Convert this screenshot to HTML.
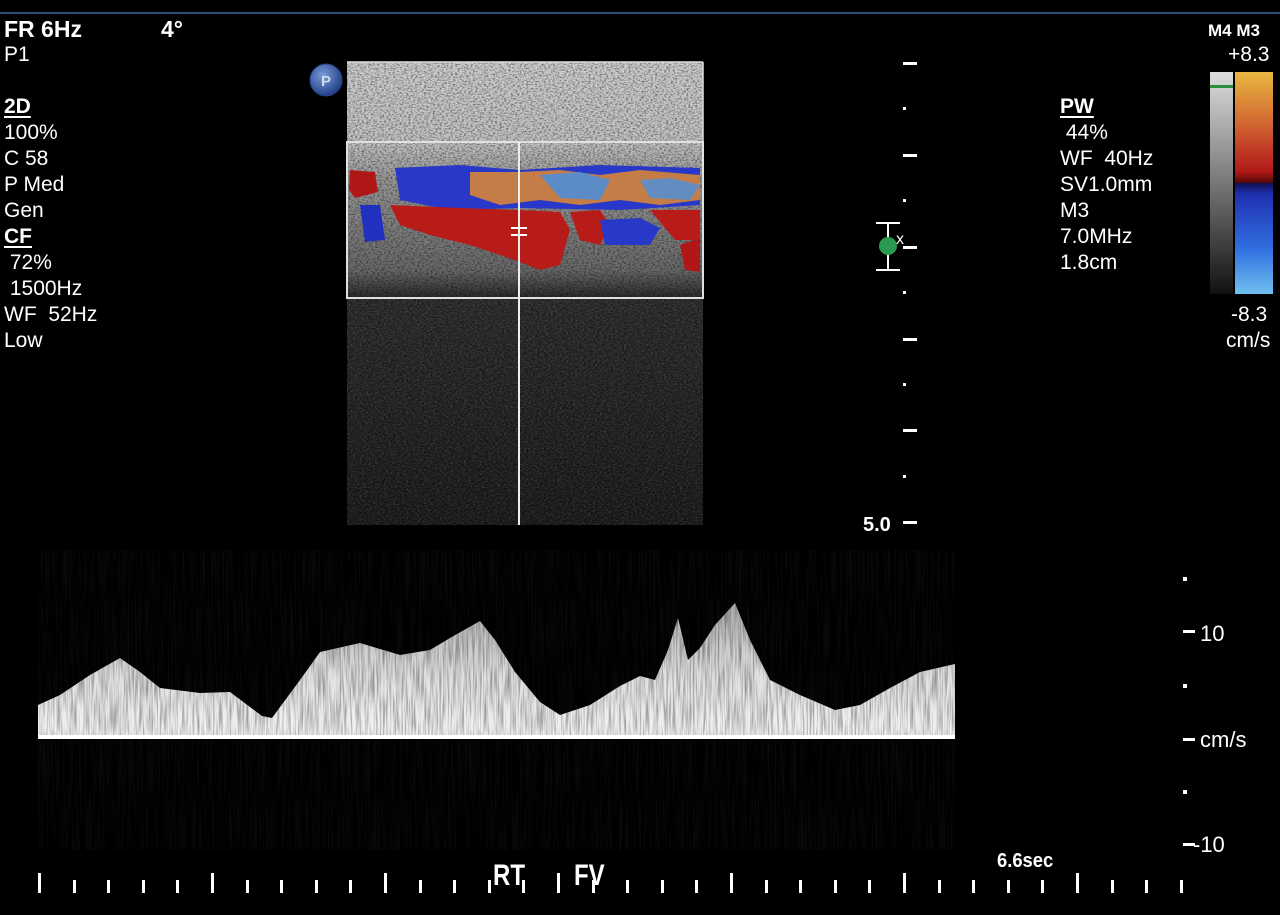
<!DOCTYPE html>
<html><head><meta charset="utf-8">
<style>
html,body{margin:0;padding:0;background:#000;}
body{width:1280px;height:915px;position:relative;overflow:hidden;font-family:"Liberation Sans",Arial,sans-serif;color:#fff;}
.t{position:absolute;font-size:21px;line-height:26px;white-space:pre;}
.b{font-weight:bold;}
u{text-decoration:underline;text-decoration-thickness:2px;text-underline-offset:3px;}
</style></head><body>
<div style="position:absolute;left:0;top:12px;width:1280px;height:2px;background:#2c4f7e"></div>

<div class="t b" style="left:4px;top:16px;font-size:23px">FR 6Hz</div>
<div class="t b" style="left:161px;top:16px;font-size:23px">4°</div>
<div class="t" style="left:4px;top:42px">P1</div>
<div class="t" style="left:4px;top:94px"><b><u>2D</u></b>
100%
C 58
P Med
Gen
<b><u>CF</u></b>
 72%
 1500Hz
WF  52Hz
Low</div>

<div class="t" style="left:1060px;top:94px"><b><u>PW</u></b>
 44%
WF  40Hz
SV1.0mm
M3
7.0MHz
1.8cm</div>

<div class="t b" style="left:1208px;top:18px;font-size:17px">M4 M3</div>
<div class="t" style="left:1228px;top:42px">+8.3</div>
<div class="t" style="left:1231px;top:302px">-8.3</div>
<div class="t" style="left:1226px;top:328px">cm/s</div>

<svg width="1280" height="915" style="position:absolute;left:0;top:0">
<defs>
<filter id="sp" x="0" y="0" width="100%" height="100%">
<feTurbulence type="fractalNoise" baseFrequency="0.45 0.7" numOctaves="2" seed="3"/>
<feColorMatrix type="matrix" values="0 0 0 0 0  0 0 0 0 0  0 0 0 0 0  2.2 0 0 0 -0.9"/>
</filter>
<filter id="spw" x="0" y="0" width="100%" height="100%">
<feTurbulence type="fractalNoise" baseFrequency="0.45 0.7" numOctaves="2" seed="9"/>
<feColorMatrix type="matrix" values="0 0 0 0 1  0 0 0 0 1  0 0 0 0 1  2.2 0 0 0 -0.9"/>
</filter>
<filter id="vs" x="0" y="0" width="100%" height="100%">
<feTurbulence type="fractalNoise" baseFrequency="0.6 0.015" numOctaves="2" seed="7"/>
<feColorMatrix type="matrix" values="0 0 0 0 1  0 0 0 0 1  0 0 0 0 1  2 0 0 0 -0.8"/>
</filter>
<filter id="vsd" x="0" y="0" width="100%" height="100%">
<feTurbulence type="fractalNoise" baseFrequency="0.6 0.03" numOctaves="2" seed="5"/>
<feColorMatrix type="matrix" values="0 0 0 0 0  0 0 0 0 0  0 0 0 0 0  2 0 0 0 -0.75"/>
</filter>
<linearGradient id="cb" x1="0" y1="0" x2="0" y2="1">
<stop offset="0" stop-color="#e8b840"/><stop offset="0.25" stop-color="#d06030"/><stop offset="0.45" stop-color="#b01818"/><stop offset="0.5" stop-color="#500808"/>
<stop offset="0.5" stop-color="#101050"/><stop offset="0.55" stop-color="#2030b0"/><stop offset="0.8" stop-color="#3070e0"/><stop offset="1" stop-color="#70c0f0"/></linearGradient>
<linearGradient id="gb" x1="0" y1="0" x2="0" y2="1"><stop offset="0" stop-color="#ddd"/><stop offset="1" stop-color="#111"/></linearGradient>
<linearGradient id="bm" x1="0" y1="0" x2="0" y2="1">
<stop offset="0" stop-color="#cfcfcf"/><stop offset="0.17" stop-color="#c4c4c4"/><stop offset="0.25" stop-color="#9a9a9a"/><stop offset="0.45" stop-color="#6a6a6a"/><stop offset="0.51" stop-color="#2a2a2a"/><stop offset="1" stop-color="#181818"/></linearGradient>
<radialGradient id="pb" cx="0.4" cy="0.35" r="0.7"><stop offset="0" stop-color="#7a9ad8"/><stop offset="1" stop-color="#1d3a80"/></radialGradient>
<linearGradient id="wf" x1="0" y1="0" x2="0" y2="1"><stop offset="0" stop-color="#aaa"/><stop offset="0.5" stop-color="#ddd"/><stop offset="1" stop-color="#f4f4f4"/></linearGradient>
<clipPath id="wclip"><path id="wave" d="M38,705 L60,695 L90,675 L120,658 L140,672 L160,688 L200,693 L230,692 L262,716 L272,718 L300,680 L320,652 L360,643 L400,655 L430,650 L450,638 L480,621 L495,640 L515,672 L540,702 L560,715 L590,705 L620,686 L640,676 L655,680 L668,650 L678,618 L688,660 L700,648 L715,625 L735,603 L750,640 L770,680 L800,695 L835,710 L860,705 L890,688 L920,672 L955,664 L955,737 L38,737 Z"/></clipPath>
</defs>

<rect x="347" y="62" width="356" height="463" fill="url(#bm)"/>
<rect x="347" y="62" width="356" height="463" filter="url(#sp)" opacity="0.55"/>
<rect x="347" y="298" width="356" height="227" filter="url(#spw)" opacity="0.15"/>
<line x1="347" y1="62" x2="703" y2="62" stroke="#ddd" stroke-width="1.5"/>
<line x1="703" y1="62" x2="703" y2="298" stroke="#ddd" stroke-width="1.5"/>

<g>
<path d="M395,168 L460,165 L520,170 L600,165 L700,168 L700,205 L620,210 L520,208 L450,210 L400,200 Z" fill="#2838c8"/>
<path d="M470,172 L520,172 L560,170 L600,175 L640,170 L700,175 L700,200 L660,205 L620,200 L580,205 L540,200 L500,205 L470,195 Z" fill="#e08a30" opacity="0.85"/>
<path d="M540,175 L580,172 L610,180 L600,200 L560,198 Z" fill="#4090e8" opacity="0.8"/>
<path d="M640,180 L670,178 L700,185 L690,200 L650,198 Z" fill="#4a90e0" opacity="0.8"/>
<path d="M350,170 L375,172 L378,192 L355,198 L349,190 Z" fill="#b01818"/>
<path d="M360,205 L380,205 L385,240 L365,242 Z" fill="#2030c0"/>
<path d="M390,205 L460,208 L520,210 L560,212 L570,230 L560,265 L540,270 L520,262 L500,255 L470,245 L430,235 L400,225 Z" fill="#b81c18"/>
<path d="M570,212 L600,210 L610,225 L600,245 L580,240 Z" fill="#b81c18"/>
<path d="M600,220 L640,218 L660,228 L650,245 L605,245 Z" fill="#2838c8"/>
<path d="M650,210 L700,210 L700,240 L675,240 Z" fill="#b81c18"/>
<path d="M680,245 L700,238 L700,272 L685,270 Z" fill="#b01818"/>
</g>
<rect x="347" y="142" width="356" height="156" fill="none" stroke="#e0e0e0" stroke-width="2"/>
<line x1="519" y1="142" x2="519" y2="525" stroke="#eee" stroke-width="2"/>
<line x1="511" y1="228" x2="527" y2="228" stroke="#fff" stroke-width="2"/>
<line x1="511" y1="235" x2="527" y2="235" stroke="#fff" stroke-width="2"/>

<circle cx="326" cy="80" r="16" fill="url(#pb)" stroke="#23408a"/>
<text x="326" y="86" font-family="Liberation Sans" font-weight="bold" font-size="15" fill="#d0dcf0" text-anchor="middle">P</text>

<g fill="#fff">
<rect x="903" y="62" width="14" height="3"/><rect x="903" y="107" width="3" height="3"/>
<rect x="903" y="154" width="14" height="3"/><rect x="903" y="199" width="3" height="3"/>
<rect x="903" y="246" width="14" height="3"/><rect x="903" y="291" width="3" height="3"/>
<rect x="903" y="338" width="14" height="3"/><rect x="903" y="383" width="3" height="3"/>
<rect x="903" y="429" width="14" height="3"/><rect x="903" y="475" width="3" height="3"/>
<rect x="903" y="521" width="14" height="3"/>
</g>
<text x="863" y="531" font-family="Liberation Sans" font-weight="bold" font-size="20" fill="#fff">5.0</text>
<g stroke="#fff" stroke-width="2" fill="none">
<line x1="888" y1="223" x2="888" y2="270"/><line x1="876" y1="223" x2="900" y2="223"/><line x1="876" y1="270" x2="900" y2="270"/>
</g>
<circle cx="888" cy="246" r="9" fill="#2a9a50"/>
<text x="896" y="244" font-family="Liberation Sans" font-size="16" fill="#fff">x</text>

<rect x="1210" y="72" width="23" height="222" fill="url(#gb)"/>
<rect x="1210" y="85" width="23" height="3" fill="#2a9040"/>
<rect x="1235" y="72" width="38" height="222" fill="url(#cb)"/>

<rect x="38" y="550" width="917" height="300" filter="url(#vs)" opacity="0.05"/>
<use href="#wave" fill="url(#wf)"/>
<g clip-path="url(#wclip)"><rect x="38" y="590" width="917" height="150" filter="url(#vsd)" opacity="0.4"/></g>
<rect x="38" y="735" width="917" height="4" fill="#fff"/>

<g fill="#fff">
<rect x="1183" y="577" width="4" height="4"/>
<rect x="1183" y="630" width="12" height="3"/>
<rect x="1183" y="684" width="4" height="4"/>
<rect x="1183" y="738" width="12" height="3"/>
<rect x="1183" y="790" width="4" height="4"/>
<rect x="1183" y="843" width="12" height="3"/>
</g>
<text x="1200" y="641" font-family="Liberation Sans" font-size="22" fill="#fff">10</text>
<text x="1200" y="747" font-family="Liberation Sans" font-size="22" fill="#fff">cm/s</text>
<text x="1193" y="852" font-family="Liberation Sans" font-size="22" fill="#fff">-10</text>

<text x="997" y="867" font-family="Liberation Sans" font-weight="bold" font-size="20" fill="#fff" transform="translate(997,0) scale(0.92,1) translate(-997,0)">6.6sec</text>
<text x="493" y="885" font-family="Liberation Sans" font-weight="bold" font-size="30" fill="#fff" transform="translate(493,0) scale(0.8,1) translate(-493,0)">RT</text>
<text x="574" y="885" font-family="Liberation Sans" font-weight="bold" font-size="30" fill="#fff" transform="translate(574,0) scale(0.8,1) translate(-574,0)">FV</text>

<g fill="#fff">
<rect x="38" y="873" width="3" height="20"/><rect x="73" y="880" width="3" height="13"/><rect x="107" y="880" width="3" height="13"/><rect x="142" y="880" width="3" height="13"/><rect x="176" y="880" width="3" height="13"/>
<rect x="211" y="873" width="3" height="20"/><rect x="246" y="880" width="3" height="13"/><rect x="280" y="880" width="3" height="13"/><rect x="315" y="880" width="3" height="13"/><rect x="349" y="880" width="3" height="13"/>
<rect x="384" y="873" width="3" height="20"/><rect x="419" y="880" width="3" height="13"/><rect x="453" y="880" width="3" height="13"/><rect x="488" y="880" width="3" height="13"/><rect x="522" y="880" width="3" height="13"/>
<rect x="557" y="873" width="3" height="20"/><rect x="592" y="880" width="3" height="13"/><rect x="626" y="880" width="3" height="13"/><rect x="661" y="880" width="3" height="13"/><rect x="695" y="880" width="3" height="13"/>
<rect x="730" y="873" width="3" height="20"/><rect x="765" y="880" width="3" height="13"/><rect x="799" y="880" width="3" height="13"/><rect x="834" y="880" width="3" height="13"/><rect x="868" y="880" width="3" height="13"/>
<rect x="903" y="873" width="3" height="20"/><rect x="938" y="880" width="3" height="13"/><rect x="972" y="880" width="3" height="13"/><rect x="1007" y="880" width="3" height="13"/><rect x="1041" y="880" width="3" height="13"/>
<rect x="1076" y="873" width="3" height="20"/><rect x="1111" y="880" width="3" height="13"/><rect x="1145" y="880" width="3" height="13"/><rect x="1180" y="880" width="3" height="13"/>
</g>
</svg>
</body></html>
